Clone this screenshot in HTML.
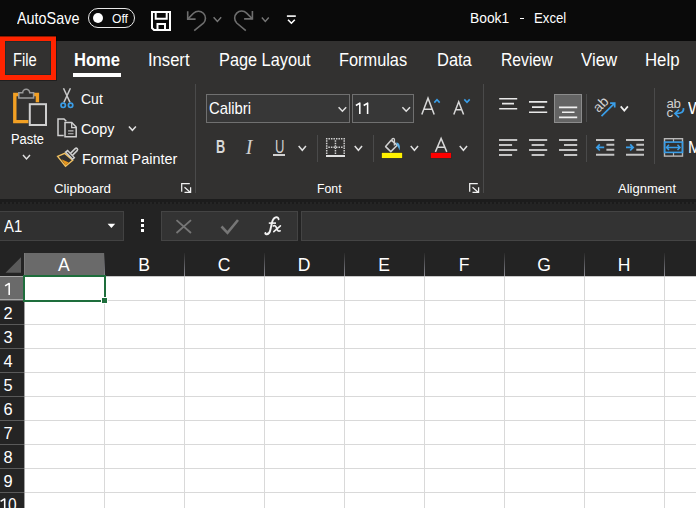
<!DOCTYPE html><html><head><meta charset="utf-8"><style>html,body{margin:0;padding:0;width:696px;height:508px;overflow:hidden;background:#fff;position:relative}</style></head><body><div style="position:absolute;left:0px;top:0px;width:696px;height:41px;background:#0a0a0a;"></div>
<div style="position:absolute;left:0px;top:41px;width:696px;height:158px;background:#323130;"></div>
<div style="position:absolute;left:0px;top:199px;width:696px;height:3px;background:#1c1c1c;"></div>
<div style="position:absolute;left:0px;top:202px;width:696px;height:3px;background:#202020;background-image:repeating-linear-gradient(90deg,#1b1b1b 0 2px,#252525 2px 4px)"></div>
<div style="position:absolute;left:0px;top:204px;width:696px;height:73px;background:#232323;"></div>
<div style="position:absolute;left:0px;top:277px;width:696px;height:231px;background:#ffffff;"></div>
<div style="position:absolute;left:17.10px;top:11.46px;font-family:'Liberation Sans', sans-serif;font-size:15.99px;line-height:15.99px;color:#fff;font-weight:400;letter-spacing:0.000px;white-space:pre;transform:scaleX(0.9003);transform-origin:0 0;">AutoSave</div>
<div style="position:absolute;left:88px;top:8px;width:47px;height:20px;border:1.3px solid #e8e8e8;border-radius:10px;box-sizing:border-box"></div>
<div style="position:absolute;left:92.9px;top:12.9px;width:10.1px;height:10.1px;background:#fff;border-radius:50%"></div>
<div style="position:absolute;left:111.80px;top:11.92px;font-family:'Liberation Sans', sans-serif;font-size:13.08px;line-height:13.08px;color:#fff;font-weight:400;letter-spacing:0.000px;white-space:pre;transform:scaleX(0.9266);transform-origin:0 0;">Off</div>
<svg style="position:absolute;left:0px;top:0px;overflow:visible" width="1" height="1"><path d="M152 12H170V30H154L152 28Z" fill="none" stroke="#fff" stroke-width="2"/><path d="M155.7 12V18.7H166.7V12" fill="none" stroke="#fff" stroke-width="2"/><path d="M157.5 30V23.9H165V30" fill="none" stroke="#fff" stroke-width="2"/></svg>
<svg style="position:absolute;left:0px;top:0px;overflow:visible" width="1" height="1"><path d="M187.7 11.2V19.1H195.6" fill="none" stroke="#6e6e6e" stroke-width="1.6"/><path d="M187.7 19.1L193.5 13.3A7 7 0 0 1 203.4 23.2L194.2 30.6" fill="none" stroke="#6e6e6e" stroke-width="1.6"/></svg>
<svg style="position:absolute;left:0;top:0;overflow:visible" width="1" height="1"><path d="M213.6 17.25L217.4 21.549999999999997L221.20000000000002 17.25" fill="none" stroke="#777" stroke-width="1.4"/></svg>
<svg style="position:absolute;left:0px;top:0px;overflow:visible" width="1" height="1"><path d="M252.4 11.1V18.9H244.1" fill="none" stroke="#6e6e6e" stroke-width="1.6"/><path d="M252.4 18.9L246.6 13.1A7 7 0 0 0 236.7 23.0L245.8 30.7" fill="none" stroke="#6e6e6e" stroke-width="1.6"/></svg>
<svg style="position:absolute;left:0;top:0;overflow:visible" width="1" height="1"><path d="M261.85 17.55L265.3 21.45L268.75 17.55" fill="none" stroke="#777" stroke-width="1.4"/></svg>
<svg style="position:absolute;left:0px;top:0px;overflow:visible" width="1" height="1"><path d="M286.9 16.1H295.8" stroke="#fff" stroke-width="1.6"/><path d="M288 19.8L291.4 23.2L294.8 19.8" fill="none" stroke="#fff" stroke-width="1.6"/></svg>
<div style="position:absolute;left:470.00px;top:9.83px;font-family:'Liberation Sans', sans-serif;font-size:15.55px;line-height:15.55px;color:#fff;font-weight:400;letter-spacing:0.000px;white-space:pre;transform:scaleX(0.8891);transform-origin:0 0;">Book1</div>
<div style="position:absolute;left:533.75px;top:9.83px;font-family:'Liberation Sans', sans-serif;font-size:15.55px;line-height:15.55px;color:#fff;font-weight:400;letter-spacing:0.000px;white-space:pre;transform:scaleX(0.8481);transform-origin:0 0;">Excel</div>
<div style="position:absolute;left:519.8px;top:18px;width:4.5px;height:1.2px;background:#ffffff;"></div>
<div style="position:absolute;left:-1px;top:35px;width:58px;height:46px;background:none;border:1px solid rgba(0,0,0,0.35);box-sizing:border-box"></div>
<div style="position:absolute;left:0px;top:36px;width:56px;height:44px;background:none;border:5px solid #ff2400;box-sizing:border-box;box-shadow:inset 0 0 0 1px #262b2b"></div>
<div style="position:absolute;left:0px;top:36px;width:56px;height:1px;background:#8c1a00;"></div>
<div style="position:absolute;left:12.90px;top:52.23px;font-family:'Liberation Sans', sans-serif;font-size:17.44px;line-height:17.44px;color:#fff;font-weight:400;letter-spacing:0.000px;white-space:pre;transform:scaleX(0.8475);transform-origin:0 0;">File</div>
<div style="position:absolute;left:73.90px;top:52.23px;font-family:'Liberation Sans', sans-serif;font-size:17.44px;line-height:17.44px;color:#fff;font-weight:700;letter-spacing:0.000px;white-space:pre;transform:scaleX(0.9507);transform-origin:0 0;">Home</div>
<div style="position:absolute;left:73px;top:73px;width:48px;height:4px;background:#ffffff;"></div>
<div style="position:absolute;left:147.90px;top:52.23px;font-family:'Liberation Sans', sans-serif;font-size:17.44px;line-height:17.44px;color:#fff;font-weight:400;letter-spacing:0.000px;white-space:pre;transform:scaleX(0.9517);transform-origin:0 0;">Insert</div>
<div style="position:absolute;left:218.70px;top:52.23px;font-family:'Liberation Sans', sans-serif;font-size:17.44px;line-height:17.44px;color:#fff;font-weight:400;letter-spacing:0.000px;white-space:pre;transform:scaleX(0.9353);transform-origin:0 0;">Page Layout</div>
<div style="position:absolute;left:339.40px;top:52.23px;font-family:'Liberation Sans', sans-serif;font-size:17.44px;line-height:17.44px;color:#fff;font-weight:400;letter-spacing:0.000px;white-space:pre;transform:scaleX(0.9377);transform-origin:0 0;">Formulas</div>
<div style="position:absolute;left:436.50px;top:52.23px;font-family:'Liberation Sans', sans-serif;font-size:17.44px;line-height:17.44px;color:#fff;font-weight:400;letter-spacing:0.000px;white-space:pre;transform:scaleX(0.9434);transform-origin:0 0;">Data</div>
<div style="position:absolute;left:500.70px;top:52.23px;font-family:'Liberation Sans', sans-serif;font-size:17.44px;line-height:17.44px;color:#fff;font-weight:400;letter-spacing:0.000px;white-space:pre;transform:scaleX(0.9020);transform-origin:0 0;">Review</div>
<div style="position:absolute;left:581.00px;top:52.23px;font-family:'Liberation Sans', sans-serif;font-size:17.44px;line-height:17.44px;color:#fff;font-weight:400;letter-spacing:0.000px;white-space:pre;transform:scaleX(0.9653);transform-origin:0 0;">View</div>
<div style="position:absolute;left:645.00px;top:52.23px;font-family:'Liberation Sans', sans-serif;font-size:17.44px;line-height:17.44px;color:#fff;font-weight:400;letter-spacing:0.000px;white-space:pre;transform:scaleX(0.9625);transform-origin:0 0;">Help</div>
<svg style="position:absolute;left:0px;top:0px;overflow:visible" width="1" height="1"><path d="M28.4 121.6H14.8V94.5H37.4V102.2" fill="none" stroke="#f2a024" stroke-width="3.4"/><path d="M18.8 92.8H22.7A3.5 3.5 0 0 1 29.7 92.8H33.6V98H18.8Z" fill="#323130" stroke="#9a9a9a" stroke-width="1.5"/><rect x="29.8" y="104.2" width="16.2" height="20.8" fill="#323130" stroke="#cfcfcf" stroke-width="2"/></svg>
<div style="position:absolute;left:10.90px;top:131.08px;font-family:'Liberation Sans', sans-serif;font-size:15.26px;line-height:15.26px;color:#fff;font-weight:400;letter-spacing:0.000px;white-space:pre;transform:scaleX(0.8437);transform-origin:0 0;">Paste</div>
<svg style="position:absolute;left:0;top:0;overflow:visible" width="1" height="1"><path d="M23.0 155.1L26.5 158.9L30.0 155.1" fill="none" stroke="#e0e0e0" stroke-width="1.5"/></svg>
<svg style="position:absolute;left:0px;top:0px;overflow:visible" width="1" height="1"><path d="M63.5 88.3L70 102.4M70.4 88.3L63.9 102.4" fill="none" stroke="#c8c8c8" stroke-width="1.5"/><circle cx="63.2" cy="105.3" r="2.2" fill="none" stroke="#3a9ee8" stroke-width="1.7"/><circle cx="70.6" cy="105.3" r="2.2" fill="none" stroke="#3a9ee8" stroke-width="1.7"/></svg>
<div style="position:absolute;left:81.20px;top:91.08px;font-family:'Liberation Sans', sans-serif;font-size:15.26px;line-height:15.26px;color:#fff;font-weight:400;letter-spacing:0.000px;white-space:pre;transform:scaleX(0.9186);transform-origin:0 0;">Cut</div>
<svg style="position:absolute;left:0px;top:0px;overflow:visible" width="1" height="1"><path d="M63.7 135.5H58V119H64L66.3 121.3" fill="none" stroke="#d0d0d0" stroke-width="1.5"/><path d="M65 136.8V122.5H71.7L76.2 127V136.8Z" fill="none" stroke="#d0d0d0" stroke-width="1.5"/><path d="M71.7 122.5V127.6H76.2" fill="none" stroke="#d0d0d0" stroke-width="1.3"/><path d="M68.1 130.9H73.5M68.1 133.7H73.5" stroke="#c0c0c0" stroke-width="1.1"/></svg>
<div style="position:absolute;left:81.20px;top:120.78px;font-family:'Liberation Sans', sans-serif;font-size:15.26px;line-height:15.26px;color:#fff;font-weight:400;letter-spacing:0.000px;white-space:pre;transform:scaleX(0.9401);transform-origin:0 0;">Copy</div>
<svg style="position:absolute;left:0;top:0;overflow:visible" width="1" height="1"><path d="M128.9 126.5L132.4 130.3L135.9 126.5" fill="none" stroke="#e0e0e0" stroke-width="1.5"/></svg>
<svg style="position:absolute;left:0px;top:0px;overflow:visible" width="1" height="1"><path d="M57.6 156.4L64.7 153.4L72.7 160.2L65.5 166.2Z" fill="none" stroke="#f0c060" stroke-width="1.4"/><path d="M61.5 159.2L68.8 162.5L65.6 165.4Z" fill="#e8961c"/><path d="M65.6 152.1L67.6 150.6L74.3 157.6L72.6 159.2Z" fill="none" stroke="#cfcfcf" stroke-width="1.5"/><path d="M70.4 153.4L75.2 148.6A1.3 1.3 0 0 1 77.2 150.6L72.4 155.4" fill="none" stroke="#cfcfcf" stroke-width="1.5"/></svg>
<div style="position:absolute;left:81.75px;top:150.90px;font-family:'Liberation Sans', sans-serif;font-size:15.12px;line-height:15.12px;color:#fff;font-weight:400;letter-spacing:0.000px;white-space:pre;transform:scaleX(0.9526);transform-origin:0 0;">Format Painter</div>
<div style="position:absolute;left:53.75px;top:182.20px;font-family:'Liberation Sans', sans-serif;font-size:13.23px;line-height:13.23px;color:#fff;font-weight:400;letter-spacing:0.000px;white-space:pre;transform:scaleX(1.0078);transform-origin:0 0;">Clipboard</div>
<svg style="position:absolute;left:0px;top:0px;overflow:visible" width="1" height="1"><path d="M181.7 191.8V183.6H189.8" fill="none" stroke="#f0f0f0" stroke-width="1.25"/><path d="M184.5 187.3L190.2 192.2M190.6 187.2V192.4H184.5" fill="none" stroke="#f0f0f0" stroke-width="1.25"/></svg>
<div style="position:absolute;left:195px;top:84px;width:1px;height:109px;background:#4a4a4a;"></div>
<div style="position:absolute;left:206px;top:94px;width:144px;height:29px;background:#373737;border:1px solid #707070;box-sizing:border-box"></div>
<div style="position:absolute;left:209.30px;top:101.46px;font-family:'Liberation Sans', sans-serif;font-size:15.99px;line-height:15.99px;color:#fff;font-weight:400;letter-spacing:0.000px;white-space:pre;transform:scaleX(0.9288);transform-origin:0 0;">Calibri</div>
<svg style="position:absolute;left:0;top:0;overflow:visible" width="1" height="1"><path d="M338.59999999999997 107.2L342.4 111.2L346.2 107.2" fill="none" stroke="#e0e0e0" stroke-width="1.5"/></svg>
<div style="position:absolute;left:352px;top:94px;width:62px;height:29px;background:#373737;border:1px solid #707070;box-sizing:border-box"></div>
<svg style="position:absolute;left:0;top:0;overflow:visible" width="1" height="1"><path d="M359.8 114V103.10000000000001L355.90000000000003 105.51800000000001" fill="none" stroke="#fff" stroke-width="1.55" stroke-linejoin="round"/></svg>
<svg style="position:absolute;left:0;top:0;overflow:visible" width="1" height="1"><path d="M367.6 114V103.10000000000001L363.70000000000005 105.51800000000001" fill="none" stroke="#fff" stroke-width="1.55" stroke-linejoin="round"/></svg>
<svg style="position:absolute;left:0;top:0;overflow:visible" width="1" height="1"><path d="M402.4 107.2L406.2 111.2L410.0 107.2" fill="none" stroke="#e0e0e0" stroke-width="1.5"/></svg>
<svg style="position:absolute;left:0px;top:0px;overflow:visible" width="1" height="1"><path d="M421.8 114.6L428 98.2L434.2 114.6M424 109.2H432" fill="none" stroke="#d8d8d8" stroke-width="1.5"/><path d="M434.3 102.6L437 99.6L439.7 102.6" fill="none" stroke="#3a9ee8" stroke-width="1.6"/><path d="M453.8 114.6L458.7 101.8L463.6 114.6M455.5 109.7H462" fill="none" stroke="#d8d8d8" stroke-width="1.5"/><path d="M464.3 99.4L467 102.4L469.7 99.4" fill="none" stroke="#3a9ee8" stroke-width="1.6"/></svg>
<div style="position:absolute;left:215.80px;top:138.00px;font-family:'Liberation Sans', sans-serif;font-size:18.90px;line-height:18.90px;color:#d8d8d8;font-weight:700;letter-spacing:0.000px;white-space:pre;transform:scaleX(0.6762);transform-origin:0 0;">B</div>
<div style="position:absolute;left:245.80px;top:137.07px;font-family:'Liberation Serif', serif;font-size:20.00px;line-height:20.00px;color:#d0d0d0;font-weight:400;letter-spacing:0.000px;white-space:pre;font-style:italic">I</div>
<div style="position:absolute;left:274.80px;top:138.00px;font-family:'Liberation Sans', sans-serif;font-size:18.90px;line-height:18.90px;color:#d0d0d0;font-weight:400;letter-spacing:0.000px;white-space:pre;transform:scaleX(0.6909);transform-origin:0 0;">U</div>
<div style="position:absolute;left:273.2px;top:154px;width:12.1px;height:2px;background:#d0d0d0;"></div>
<svg style="position:absolute;left:0;top:0;overflow:visible" width="1" height="1"><path d="M298.65000000000003 146.1L302.3 150.29999999999998L305.95 146.1" fill="none" stroke="#e0e0e0" stroke-width="1.5"/></svg>
<div style="position:absolute;left:317px;top:135px;width:1px;height:27px;background:#4a4a4a;"></div>
<svg style="position:absolute;left:0px;top:0px;overflow:visible" width="1" height="1"><path d="M325.95 137.95h1.5v1.5h-1.5zM328.45 137.95h1.5v1.5h-1.5zM330.95 137.95h1.5v1.5h-1.5zM333.45 137.95h1.5v1.5h-1.5zM335.95 137.95h1.5v1.5h-1.5zM338.45 137.95h1.5v1.5h-1.5zM340.95 137.95h1.5v1.5h-1.5zM343.45 137.95h1.5v1.5h-1.5zM325.95 140.35h1.5v1.5h-1.5zM325.95 142.77h1.5v1.5h-1.5zM325.95 145.19h1.5v1.5h-1.5zM325.95 147.61h1.5v1.5h-1.5zM325.95 150.03h1.5v1.5h-1.5zM325.95 152.45h1.5v1.5h-1.5zM343.45 140.35h1.5v1.5h-1.5zM343.45 142.77h1.5v1.5h-1.5zM343.45 145.19h1.5v1.5h-1.5zM343.45 147.61h1.5v1.5h-1.5zM343.45 150.03h1.5v1.5h-1.5zM343.45 152.45h1.5v1.5h-1.5zM334.70 140.35h1.5v1.5h-1.5zM334.70 142.77h1.5v1.5h-1.5zM334.70 145.19h1.5v1.5h-1.5zM334.70 147.61h1.5v1.5h-1.5zM334.70 150.03h1.5v1.5h-1.5zM334.70 152.45h1.5v1.5h-1.5zM328.35 146.55h1.5v1.5h-1.5zM330.89 146.55h1.5v1.5h-1.5zM333.43 146.55h1.5v1.5h-1.5zM335.97 146.55h1.5v1.5h-1.5zM338.51 146.55h1.5v1.5h-1.5zM341.05 146.55h1.5v1.5h-1.5z" fill="#d0d0d0"/><path d="M326 156H345" stroke="#e0e0e0" stroke-width="2"/></svg>
<svg style="position:absolute;left:0;top:0;overflow:visible" width="1" height="1"><path d="M354.75 146.1L358.4 150.29999999999998L362.04999999999995 146.1" fill="none" stroke="#e0e0e0" stroke-width="1.5"/></svg>
<div style="position:absolute;left:373px;top:135px;width:1px;height:27px;background:#4a4a4a;"></div>
<svg style="position:absolute;left:0px;top:0px;overflow:visible" width="1" height="1"><rect x="381.3" y="152.3" width="21.4" height="6.3" fill="#1c1c28"/><rect x="381.8" y="152.8" width="20.4" height="5.3" fill="#fff100"/><path d="M385.6 146.6L391.1 140.2L397.2 145.2L390.8 151.6Z" fill="none" stroke="#d0d0d0" stroke-width="1.5" stroke-linejoin="round"/><path d="M392 141.2V139.6A1.2 1.2 0 0 1 394.4 139.6V145.6" fill="none" stroke="#d0d0d0" stroke-width="1.4"/><path d="M396.2 142.6Q399.2 142.4 399.9 146.5L399.6 150.6Q398.2 147 397 145.5Z" fill="#5ab0e8"/></svg>
<svg style="position:absolute;left:0;top:0;overflow:visible" width="1" height="1"><path d="M410.75 146.1L414.4 150.29999999999998L418.04999999999995 146.1" fill="none" stroke="#e0e0e0" stroke-width="1.5"/></svg>
<svg style="position:absolute;left:0px;top:0px;overflow:visible" width="1" height="1"><rect x="430.3" y="152.3" width="21.3" height="6.3" fill="#1f2a2a"/><rect x="430.8" y="152.8" width="20.3" height="5.3" fill="#ff0000"/><path d="M435.4 151.9L441.1 138.4L446.8 151.9M437.2 147.2H445" fill="none" stroke="#d8d8d8" stroke-width="1.5"/></svg>
<svg style="position:absolute;left:0;top:0;overflow:visible" width="1" height="1"><path d="M459.75 146.1L463.4 150.29999999999998L467.04999999999995 146.1" fill="none" stroke="#e0e0e0" stroke-width="1.5"/></svg>
<div style="position:absolute;left:316.60px;top:181.92px;font-family:'Liberation Sans', sans-serif;font-size:13.08px;line-height:13.08px;color:#fff;font-weight:400;letter-spacing:0.000px;white-space:pre;transform:scaleX(0.9403);transform-origin:0 0;">Font</div>
<svg style="position:absolute;left:0px;top:0px;overflow:visible" width="1" height="1"><path d="M469.7 191.8V183.6H477.8" fill="none" stroke="#f0f0f0" stroke-width="1.25"/><path d="M472.5 187.3L478.2 192.2M478.6 187.2V192.4H472.5" fill="none" stroke="#f0f0f0" stroke-width="1.25"/></svg>
<div style="position:absolute;left:483px;top:84px;width:1px;height:109px;background:#4a4a4a;"></div>
<svg style="position:absolute;left:0px;top:0px;overflow:visible" width="1" height="1"><path d="M499.2 98.8H517.2M502 103.6H514M499.2 108.7H517.2" stroke="#e8e8e8" stroke-width="1.6"/></svg>
<svg style="position:absolute;left:0px;top:0px;overflow:visible" width="1" height="1"><path d="M529 101.9H547.2M532 107.1H544.5M529 112.2H547.2" stroke="#e8e8e8" stroke-width="1.6"/></svg>
<div style="position:absolute;left:554px;top:94px;width:28px;height:29px;background:#646464;border:1px solid #8c8c8c;box-sizing:border-box"></div>
<svg style="position:absolute;left:0px;top:0px;overflow:visible" width="1" height="1"><path d="M559 107.4H577.2M562 112.3H574.5M559 117.4H577.2" stroke="#f0f0f0" stroke-width="1.6"/></svg>
<div style="position:absolute;left:586px;top:94px;width:1px;height:28px;background:#4a4a4a;"></div>
<svg style="position:absolute;left:0px;top:0px;overflow:visible" width="1" height="1"><text x="0" y="0" transform="translate(598.6 113.2) rotate(-45)" font-family="Liberation Sans" font-size="14" fill="#d0d0d0">ab</text><path d="M601.5 116.1L614.7 103.2M610.1 103.2H614.7V107.5" fill="none" stroke="#3a9ee8" stroke-width="1.7"/></svg>
<svg style="position:absolute;left:0;top:0;overflow:visible" width="1" height="1"><path d="M620.6999999999999 106.35L624.3 110.65L627.9 106.35" fill="none" stroke="#f0f0f0" stroke-width="1.7"/></svg>
<div style="position:absolute;left:654px;top:88px;width:1px;height:76px;background:#4a4a4a;"></div>
<svg style="position:absolute;left:0px;top:0px;overflow:visible" width="1" height="1"><text x="666.6" y="108" font-family="Liberation Sans" font-size="13.3" letter-spacing="-0.4" fill="#d0d0d0">ab</text><text x="666.6" y="117" font-family="Liberation Sans" font-size="13.3" fill="#d0d0d0">c</text><path d="M683.4 108.2Q684.5 113.5 675.5 113.5M679 109.6L675 113.5L679 117.4" fill="none" stroke="#3a9ee8" stroke-width="1.7"/></svg>
<div style="position:absolute;left:687.90px;top:99.92px;font-family:'Liberation Sans', sans-serif;font-size:16.28px;line-height:16.28px;color:#fff;font-weight:400;letter-spacing:0.000px;white-space:pre;transform:scaleX(1.0053);transform-origin:0 0;">W</div>
<svg style="position:absolute;left:0px;top:0px;overflow:visible" width="1" height="1"><path d="M499 140H517.2M499 145.1H512.1M499 150H517.2M499 155H512.1" stroke="#c4c4c4" stroke-width="2"/></svg>
<svg style="position:absolute;left:0px;top:0px;overflow:visible" width="1" height="1"><path d="M529 140H547.2M531.6 145.1H544.5M529 150H547.2M531.6 155H544.5" stroke="#c4c4c4" stroke-width="2"/></svg>
<svg style="position:absolute;left:0px;top:0px;overflow:visible" width="1" height="1"><path d="M559 140H577.2M564 145.1H577.2M559 150H577.2M564 155H577.2" stroke="#c4c4c4" stroke-width="2"/></svg>
<div style="position:absolute;left:586px;top:135px;width:1px;height:27px;background:#4a4a4a;"></div>
<svg style="position:absolute;left:0px;top:0px;overflow:visible" width="1" height="1"><path d="M596 140H614.3M606.4 144.8H614.3M606.4 149.8H614.3M596 154.8H614.3" stroke="#c4c4c4" stroke-width="2"/></svg>
<svg style="position:absolute;left:0px;top:0px;overflow:visible" width="1" height="1"><path d="M596.8 147.4H604.2M599.8 144.3L596.8 147.4L599.8 150.5" fill="none" stroke="#3a9ee8" stroke-width="1.7"/></svg>
<svg style="position:absolute;left:0px;top:0px;overflow:visible" width="1" height="1"><path d="M626 140H644M636.3 144.8H644M636.3 149.8H644M626 154.8H644" stroke="#c4c4c4" stroke-width="2"/></svg>
<svg style="position:absolute;left:0px;top:0px;overflow:visible" width="1" height="1"><path d="M626 147.4H633.2M630.2 144.3L633.2 147.4L630.2 150.5" fill="none" stroke="#3a9ee8" stroke-width="1.7"/></svg>
<svg style="position:absolute;left:0px;top:0px;overflow:visible" width="1" height="1"><rect x="664.5" y="138.7" width="18" height="17.4" fill="none" stroke="#b8b8b8" stroke-width="1.4"/><path d="M673.5 138.7V142M673.5 152.6V156" stroke="#b8b8b8" stroke-width="1.2"/><rect x="664.6" y="142.1" width="17.9" height="10.3" fill="none" stroke="#3a9ee8" stroke-width="1.6"/><path d="M666.5 147.4H680M669 144.8L666.5 147.4L669 150M677.5 144.8L680 147.4L677.5 150" fill="none" stroke="#3a9ee8" stroke-width="1.5"/></svg>
<div style="position:absolute;left:687.50px;top:138.74px;font-family:'Liberation Sans', sans-serif;font-size:16.13px;line-height:16.13px;color:#fff;font-weight:400;letter-spacing:0.000px;white-space:pre;transform:scaleX(0.9940);transform-origin:0 0;">M</div>
<div style="position:absolute;left:618.20px;top:183.29px;font-family:'Liberation Sans', sans-serif;font-size:12.65px;line-height:12.65px;color:#fff;font-weight:400;letter-spacing:0.000px;white-space:pre;transform:scaleX(1.0319);transform-origin:0 0;">Alignment</div>
<div style="position:absolute;left:-1px;top:211px;width:125px;height:30px;background:#303030;border:1px solid #424242;box-sizing:border-box"></div>
<div style="position:absolute;left:4.00px;top:219.46px;font-family:'Liberation Sans', sans-serif;font-size:15.99px;line-height:15.99px;color:#fff;font-weight:400;letter-spacing:0.000px;white-space:pre;transform:scaleX(0.9292);transform-origin:0 0;">A1</div>
<svg style="position:absolute;left:0px;top:0px;overflow:visible" width="1" height="1"><path d="M107.6 223.7H115.2L111.4 227.9Z" fill="#fff"/></svg>
<div style="position:absolute;left:141px;top:219px;width:3px;height:3px;background:#ffffff;"></div>
<div style="position:absolute;left:141px;top:224px;width:3px;height:3px;background:#ffffff;"></div>
<div style="position:absolute;left:141px;top:229px;width:3px;height:3px;background:#ffffff;"></div>
<div style="position:absolute;left:161px;top:211px;width:137px;height:30px;background:#333333;border:1px solid #444444;box-sizing:border-box"></div>
<svg style="position:absolute;left:0px;top:0px;overflow:visible" width="1" height="1"><path d="M176.5 220.2L191 233M191 220.2L176.5 233" stroke="#767676" stroke-width="1.8"/><path d="M221.5 226.5L227.5 232.8L238 220" fill="none" stroke="#767676" stroke-width="2.6"/></svg>
<svg style="position:absolute;left:0px;top:0px;overflow:visible" width="1" height="1"><path d="M278.6 219.2Q278.2 216.6 275.6 217.4Q272.8 218.4 271.8 223.5L270.2 230.5Q269.2 234.6 266.2 234.2Q265 234 265.4 233" fill="none" stroke="#f2f2f2" stroke-width="1.9" stroke-linecap="round"/><path d="M268.8 223.1H276" stroke="#f2f2f2" stroke-width="1.6"/><path d="M273.3 226Q275.6 224.6 276.6 228.2Q277.6 232 280.2 230.8M280.4 225.8L273.8 231.6" fill="none" stroke="#f2f2f2" stroke-width="1.6" stroke-linecap="round"/></svg>
<div style="position:absolute;left:301px;top:211px;width:400px;height:30px;background:#333333;border:1px solid #444444;box-sizing:border-box"></div>
<div style="position:absolute;left:24px;top:253px;width:80px;height:23px;background:#6a6a6a;"></div>
<svg style="position:absolute;left:0px;top:0px;overflow:visible" width="1" height="1"><path d="M5.5 272.8H21V257.2Z" fill="#5a5a5a"/></svg>
<div style="position:absolute;left:0px;top:276px;width:24px;height:232px;background:#242424;"></div>
<div style="position:absolute;left:0px;top:276px;width:24px;height:24px;background:#6a6a6a;"></div>
<div style="position:absolute;left:58.11px;top:257.11px;font-family:'Liberation Sans', sans-serif;font-size:17.59px;line-height:17.59px;color:#ffffff;font-weight:400;letter-spacing:0.000px;white-space:pre;">A</div>
<div style="position:absolute;left:138.15px;top:257.11px;font-family:'Liberation Sans', sans-serif;font-size:17.59px;line-height:17.59px;color:#ffffff;font-weight:400;letter-spacing:0.000px;white-space:pre;">B</div>
<div style="position:absolute;left:217.67px;top:257.11px;font-family:'Liberation Sans', sans-serif;font-size:17.59px;line-height:17.59px;color:#ffffff;font-weight:400;letter-spacing:0.000px;white-space:pre;">C</div>
<div style="position:absolute;left:297.67px;top:257.11px;font-family:'Liberation Sans', sans-serif;font-size:17.59px;line-height:17.59px;color:#ffffff;font-weight:400;letter-spacing:0.000px;white-space:pre;">D</div>
<div style="position:absolute;left:378.15px;top:257.11px;font-family:'Liberation Sans', sans-serif;font-size:17.59px;line-height:17.59px;color:#ffffff;font-weight:400;letter-spacing:0.000px;white-space:pre;">E</div>
<div style="position:absolute;left:458.64px;top:257.11px;font-family:'Liberation Sans', sans-serif;font-size:17.59px;line-height:17.59px;color:#ffffff;font-weight:400;letter-spacing:0.000px;white-space:pre;">F</div>
<div style="position:absolute;left:537.14px;top:257.11px;font-family:'Liberation Sans', sans-serif;font-size:17.59px;line-height:17.59px;color:#ffffff;font-weight:400;letter-spacing:0.000px;white-space:pre;">G</div>
<div style="position:absolute;left:617.67px;top:257.11px;font-family:'Liberation Sans', sans-serif;font-size:17.59px;line-height:17.59px;color:#ffffff;font-weight:400;letter-spacing:0.000px;white-space:pre;">H</div>
<div style="position:absolute;left:701.54px;top:257.11px;font-family:'Liberation Sans', sans-serif;font-size:17.59px;line-height:17.59px;color:#ffffff;font-weight:400;letter-spacing:0.000px;white-space:pre;">I</div>
<svg style="position:absolute;left:0;top:0;overflow:visible" width="1" height="1"><path d="M9.2 295V283.4L5.1 285.94199999999995" fill="none" stroke="#fff" stroke-width="1.55" stroke-linejoin="round"/></svg>
<svg style="position:absolute;left:0;top:0;overflow:visible" width="1" height="1"><path d="M4.7 510.5V498.9L0.6000000000000005 501.44199999999995" fill="none" stroke="#fff" stroke-width="1.55" stroke-linejoin="round"/></svg>
<div style="position:absolute;left:8.20px;top:496.73px;font-family:'Liberation Sans', sans-serif;font-size:17.44px;line-height:17.44px;color:#fff;font-weight:400;letter-spacing:0.000px;white-space:pre;transform:scaleX(0.8884);transform-origin:0 0;">0</div>
<div style="position:absolute;left:3.50px;top:305.09px;font-family:'Liberation Sans', sans-serif;font-size:16.42px;line-height:16.42px;color:#fff;font-weight:400;letter-spacing:0.000px;white-space:pre;transform:scaleX(1.0000);transform-origin:0 0;">2</div>
<div style="position:absolute;left:3.50px;top:329.09px;font-family:'Liberation Sans', sans-serif;font-size:16.42px;line-height:16.42px;color:#fff;font-weight:400;letter-spacing:0.000px;white-space:pre;transform:scaleX(1.0000);transform-origin:0 0;">3</div>
<div style="position:absolute;left:3.50px;top:353.09px;font-family:'Liberation Sans', sans-serif;font-size:16.42px;line-height:16.42px;color:#fff;font-weight:400;letter-spacing:0.000px;white-space:pre;transform:scaleX(1.0000);transform-origin:0 0;">4</div>
<div style="position:absolute;left:3.50px;top:377.09px;font-family:'Liberation Sans', sans-serif;font-size:16.42px;line-height:16.42px;color:#fff;font-weight:400;letter-spacing:0.000px;white-space:pre;transform:scaleX(1.0000);transform-origin:0 0;">5</div>
<div style="position:absolute;left:3.50px;top:401.09px;font-family:'Liberation Sans', sans-serif;font-size:16.42px;line-height:16.42px;color:#fff;font-weight:400;letter-spacing:0.000px;white-space:pre;transform:scaleX(1.0000);transform-origin:0 0;">6</div>
<div style="position:absolute;left:3.50px;top:425.09px;font-family:'Liberation Sans', sans-serif;font-size:16.42px;line-height:16.42px;color:#fff;font-weight:400;letter-spacing:0.000px;white-space:pre;transform:scaleX(1.0000);transform-origin:0 0;">7</div>
<div style="position:absolute;left:3.50px;top:449.09px;font-family:'Liberation Sans', sans-serif;font-size:16.42px;line-height:16.42px;color:#fff;font-weight:400;letter-spacing:0.000px;white-space:pre;transform:scaleX(1.0000);transform-origin:0 0;">8</div>
<div style="position:absolute;left:3.50px;top:473.09px;font-family:'Liberation Sans', sans-serif;font-size:16.42px;line-height:16.42px;color:#fff;font-weight:400;letter-spacing:0.000px;white-space:pre;transform:scaleX(1.0000);transform-origin:0 0;">9</div>
<div style="position:absolute;left:104px;top:276px;width:1px;height:232px;background:#d9d9d9;"></div>
<div style="position:absolute;left:104px;top:253px;width:1px;height:23px;background:linear-gradient(#2a2a2a,#8a8a92)"></div>
<div style="position:absolute;left:184px;top:276px;width:1px;height:232px;background:#d9d9d9;"></div>
<div style="position:absolute;left:184px;top:253px;width:1px;height:23px;background:linear-gradient(#2a2a2a,#8a8a92)"></div>
<div style="position:absolute;left:264px;top:276px;width:1px;height:232px;background:#d9d9d9;"></div>
<div style="position:absolute;left:264px;top:253px;width:1px;height:23px;background:linear-gradient(#2a2a2a,#8a8a92)"></div>
<div style="position:absolute;left:344px;top:276px;width:1px;height:232px;background:#d9d9d9;"></div>
<div style="position:absolute;left:344px;top:253px;width:1px;height:23px;background:linear-gradient(#2a2a2a,#8a8a92)"></div>
<div style="position:absolute;left:424px;top:276px;width:1px;height:232px;background:#d9d9d9;"></div>
<div style="position:absolute;left:424px;top:253px;width:1px;height:23px;background:linear-gradient(#2a2a2a,#8a8a92)"></div>
<div style="position:absolute;left:504px;top:276px;width:1px;height:232px;background:#d9d9d9;"></div>
<div style="position:absolute;left:504px;top:253px;width:1px;height:23px;background:linear-gradient(#2a2a2a,#8a8a92)"></div>
<div style="position:absolute;left:584px;top:276px;width:1px;height:232px;background:#d9d9d9;"></div>
<div style="position:absolute;left:584px;top:253px;width:1px;height:23px;background:linear-gradient(#2a2a2a,#8a8a92)"></div>
<div style="position:absolute;left:664px;top:276px;width:1px;height:232px;background:#d9d9d9;"></div>
<div style="position:absolute;left:664px;top:253px;width:1px;height:23px;background:linear-gradient(#2a2a2a,#8a8a92)"></div>
<div style="position:absolute;left:744px;top:276px;width:1px;height:232px;background:#d9d9d9;"></div>
<div style="position:absolute;left:744px;top:253px;width:1px;height:23px;background:linear-gradient(#2a2a2a,#8a8a92)"></div>
<div style="position:absolute;left:24px;top:253px;width:1px;height:23px;background:#7a7a7a;"></div>
<div style="position:absolute;left:24px;top:300px;width:672px;height:1px;background:#d9d9d9;"></div>
<div style="position:absolute;left:0px;top:300px;width:24px;height:1px;background:#5a5a5a;"></div>
<div style="position:absolute;left:24px;top:324px;width:672px;height:1px;background:#d9d9d9;"></div>
<div style="position:absolute;left:0px;top:324px;width:24px;height:1px;background:#5a5a5a;"></div>
<div style="position:absolute;left:24px;top:348px;width:672px;height:1px;background:#d9d9d9;"></div>
<div style="position:absolute;left:0px;top:348px;width:24px;height:1px;background:#5a5a5a;"></div>
<div style="position:absolute;left:24px;top:372px;width:672px;height:1px;background:#d9d9d9;"></div>
<div style="position:absolute;left:0px;top:372px;width:24px;height:1px;background:#5a5a5a;"></div>
<div style="position:absolute;left:24px;top:396px;width:672px;height:1px;background:#d9d9d9;"></div>
<div style="position:absolute;left:0px;top:396px;width:24px;height:1px;background:#5a5a5a;"></div>
<div style="position:absolute;left:24px;top:420px;width:672px;height:1px;background:#d9d9d9;"></div>
<div style="position:absolute;left:0px;top:420px;width:24px;height:1px;background:#5a5a5a;"></div>
<div style="position:absolute;left:24px;top:444px;width:672px;height:1px;background:#d9d9d9;"></div>
<div style="position:absolute;left:0px;top:444px;width:24px;height:1px;background:#5a5a5a;"></div>
<div style="position:absolute;left:24px;top:468px;width:672px;height:1px;background:#d9d9d9;"></div>
<div style="position:absolute;left:0px;top:468px;width:24px;height:1px;background:#5a5a5a;"></div>
<div style="position:absolute;left:24px;top:492px;width:672px;height:1px;background:#d9d9d9;"></div>
<div style="position:absolute;left:0px;top:492px;width:24px;height:1px;background:#5a5a5a;"></div>
<div style="position:absolute;left:0px;top:276px;width:696px;height:1px;background:#c8c8c8;"></div>
<div style="position:absolute;left:0px;top:276px;width:23px;height:1px;background:#a8a8a8;"></div>
<div style="position:absolute;left:0px;top:299px;width:23px;height:1px;background:#a8a8a8;"></div>
<div style="position:absolute;left:24px;top:276px;width:1px;height:232px;background:#a0a0a0;"></div>
<div style="position:absolute;left:23px;top:275px;width:83px;height:27px;background:none;border:2px solid #1e6e3c;box-sizing:border-box"></div>
<div style="position:absolute;left:102px;top:298px;width:5px;height:5px;background:#1e6e3c;outline:1px solid #fff"></div></body></html>
